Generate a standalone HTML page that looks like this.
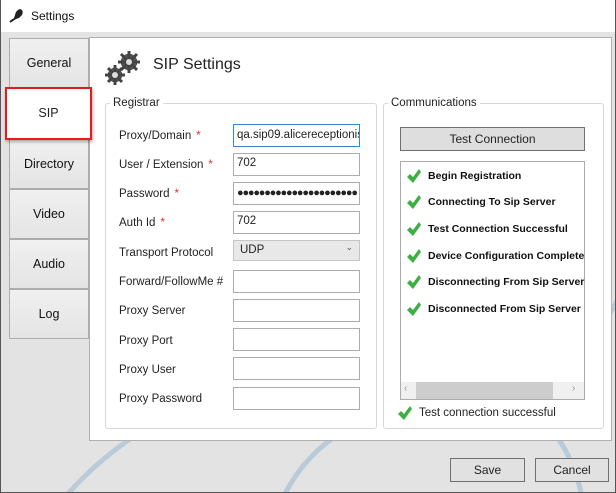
<!DOCTYPE html>
<html><head><style>
*{box-sizing:border-box;margin:0;padding:0}
body{width:616px;height:493px;overflow:hidden;font-family:"Liberation Sans",sans-serif;font-size:12px;color:#222;background:#fff;position:relative}
.abs{position:absolute}
#win{left:0;top:0;width:616px;height:493px;border:1px solid #555;border-top:none}
#title{left:1px;top:0;width:614px;height:32px;background:#fff}
#body{left:1px;top:32px;width:614px;height:460px;background:#e3e3e3;overflow:hidden}
.tab{position:absolute;left:9px;width:80px;height:50px;background:linear-gradient(#f0f0f0,#e4e4e4);border:1px solid #acacac;text-align:center;line-height:48px;font-size:12.5px;color:#111}
#main{left:89px;top:37px;width:523px;height:404px;background:#fff;border:1px solid #b0b0b0}
fieldset{position:absolute;border:1px solid #d8d8d8;border-radius:3px}
legend{font-size:11.5px;padding:0 3px;margin-left:4px;color:#222}
.lbl{position:absolute;left:119px;font-size:11.5px;color:#222}
.req{color:#e03030;margin-left:5px}
.inp{position:absolute;left:233px;width:127px;height:23px;border:1px solid #abadb3;background:#fff;font-size:11.5px;padding:3px 3px;white-space:nowrap;overflow:hidden}
.item{position:absolute;left:407px;font-size:10.5px;font-weight:bold;color:#111;white-space:nowrap}
.btn{position:absolute;border:1px solid #707070;background:#e1e1e1;text-align:center;font-size:12px}
</style></head><body>
<div class="abs" id="title">
 <svg class="abs" style="left:8px;top:7px" width="16" height="16" viewBox="0 0 16 16"><path d="M4 14 L6 8 Q7 3 11 2 Q15 3 13 8 L10 11 L7 12 Z" fill="#222"/><path d="M1 15 L5 12" stroke="#222" stroke-width="2"/></svg>
 <div class="abs" style="left:30px;top:9px;font-size:12px;color:#111">Settings</div>
</div>
<div class="abs" id="body">
 <svg class="abs" style="left:0;top:0" width="614" height="460"><g fill="none" stroke="#b9cad9" stroke-width="5"><path d="M60 470 Q200 300 600 300"/><path d="M280 470 Q330 360 500 370 Q560 380 580 460"/><path d="M200 10 Q240 120 210 200"/><path d="M540 330 Q600 310 620 260"/></g></svg>
</div>
<div class="abs" id="win"></div>
<div class="tab" style="top:38px">General</div>
<div class="tab" style="top:139px">Directory</div>
<div class="tab" style="top:189px">Video</div>
<div class="tab" style="top:239px">Audio</div>
<div class="tab" style="top:289px">Log</div>
<div class="abs" id="main"></div>
<div class="abs" style="left:5px;top:87px;width:87px;height:53px;background:#fff;border:2px solid #e41c1c;text-align:center;line-height:49px;font-size:12.5px;box-shadow:1px 2px 3px rgba(0,0,0,.3)">SIP</div>
<svg class="abs" style="left:103px;top:48px" width="40" height="40" viewBox="0 0 40 40">
 <g fill="#555" stroke="#333" stroke-width=".5">
 <circle cx="26" cy="14" r="8"/><g stroke="#444" stroke-width="3"><path d="M26 3v22M15 14h22M18 6l16 16M34 6L18 22"/></g>
 <circle cx="12" cy="27" r="7"/><g stroke="#444" stroke-width="3"><path d="M12 17v20M2 27h20M5 20l14 14M19 20L5 34"/></g>
 </g><circle cx="26" cy="14" r="3" fill="#ddd"/><circle cx="12" cy="27" r="3" fill="#ddd"/></svg>
<div class="abs" style="left:153px;top:56px;font-size:16px;color:#222">SIP Settings</div>
<fieldset style="left:105px;top:97px;width:272px;height:332px"><legend>Registrar</legend></fieldset>
<fieldset style="left:383px;top:97px;width:221px;height:332px"><legend>Communications</legend></fieldset>
<div class="lbl" style="top:130px">Proxy/Domain<span class="req">*</span></div>
<div class="lbl" style="top:159px">User / Extension<span class="req">*</span></div>
<div class="lbl" style="top:188px">Password<span class="req">*</span></div>
<div class="lbl" style="top:217px">Auth Id<span class="req">*</span></div>
<div class="lbl" style="top:247px">Transport Protocol</div>
<div class="lbl" style="top:276px">Forward/FollowMe #</div>
<div class="lbl" style="top:305px">Proxy Server</div>
<div class="lbl" style="top:335px">Proxy Port</div>
<div class="lbl" style="top:364px">Proxy User</div>
<div class="lbl" style="top:393px">Proxy Password</div>
<div class="inp" style="top:124px;border-color:#3c84d0;padding-top:4px">qa.sip09.alicereceptionist.</div>
<div class="inp" style="top:153px">702</div>
<div class="inp" style="top:182px;font-size:11px;letter-spacing:-1.2px;padding-top:4px">●●●●●●●●●●●●●●●●●●●●●●</div>
<div class="inp" style="top:211px">702</div>
<div class="inp" style="top:240px;background:#e8e8e8;border-color:#c5c5c5;height:21px;padding-left:6px">UDP<span style="position:absolute;right:6px;top:1px;font-size:9px;color:#555">&#8964;</span></div>
<div class="inp" style="top:270px"></div>
<div class="inp" style="top:299px"></div>
<div class="inp" style="top:328px"></div>
<div class="inp" style="top:357px"></div>
<div class="inp" style="top:387px"></div>
<div class="btn" style="left:400px;top:127px;width:185px;height:24px;line-height:22px;background:#dedede">Test Connection</div>
<div class="abs" style="left:400px;top:161px;width:185px;height:239px;border:1px solid #acacac;background:#fff"></div>
<div class="abs" style="left:401px;top:382px;width:183px;height:17px;background:#f0f0f0"></div>
<div class="abs" style="left:416px;top:382px;width:137px;height:17px;background:#cdcdcd"></div>
<div class="abs" style="left:404px;top:383px;font-size:10px;color:#999">&lsaquo;</div>
<div class="abs" style="left:572px;top:383px;font-size:10px;color:#999">&rsaquo;</div>
<svg width="0" height="0" style="position:absolute"><defs><symbol id="ck" viewBox="0 0 16 16"><path d="M1 9 L4 6 L7 9 L13 1 L15 4 L7 15 Z" fill="#3cb043"/></symbol></defs></svg>
<svg class="abs" style="left:406px;top:168px" width="16" height="16"><use href="#ck"/></svg><div class="item" style="left:428px;top:170px">Begin Registration</div>
<svg class="abs" style="left:406px;top:194px" width="16" height="16"><use href="#ck"/></svg><div class="item" style="left:428px;top:196px">Connecting To Sip Server</div>
<svg class="abs" style="left:406px;top:221px" width="16" height="16"><use href="#ck"/></svg><div class="item" style="left:428px;top:223px">Test Connection Successful</div>
<svg class="abs" style="left:406px;top:248px" width="16" height="16"><use href="#ck"/></svg><div class="item" style="left:428px;top:250px">Device Configuration Complete</div>
<svg class="abs" style="left:406px;top:274px" width="16" height="16"><use href="#ck"/></svg><div class="item" style="left:428px;top:276px">Disconnecting From Sip Server</div>
<svg class="abs" style="left:406px;top:301px" width="16" height="16"><use href="#ck"/></svg><div class="item" style="left:428px;top:303px">Disconnected From Sip Server</div>
<svg class="abs" style="left:397px;top:405px" width="16" height="16"><use href="#ck"/></svg>
<div class="abs" style="left:419px;top:407px;font-size:11.5px">Test connection successful</div>
<div class="btn" style="left:450px;top:458px;width:75px;height:24px;line-height:22px">Save</div>
<div class="btn" style="left:535px;top:458px;width:74px;height:24px;line-height:22px">Cancel</div>
</body></html>
